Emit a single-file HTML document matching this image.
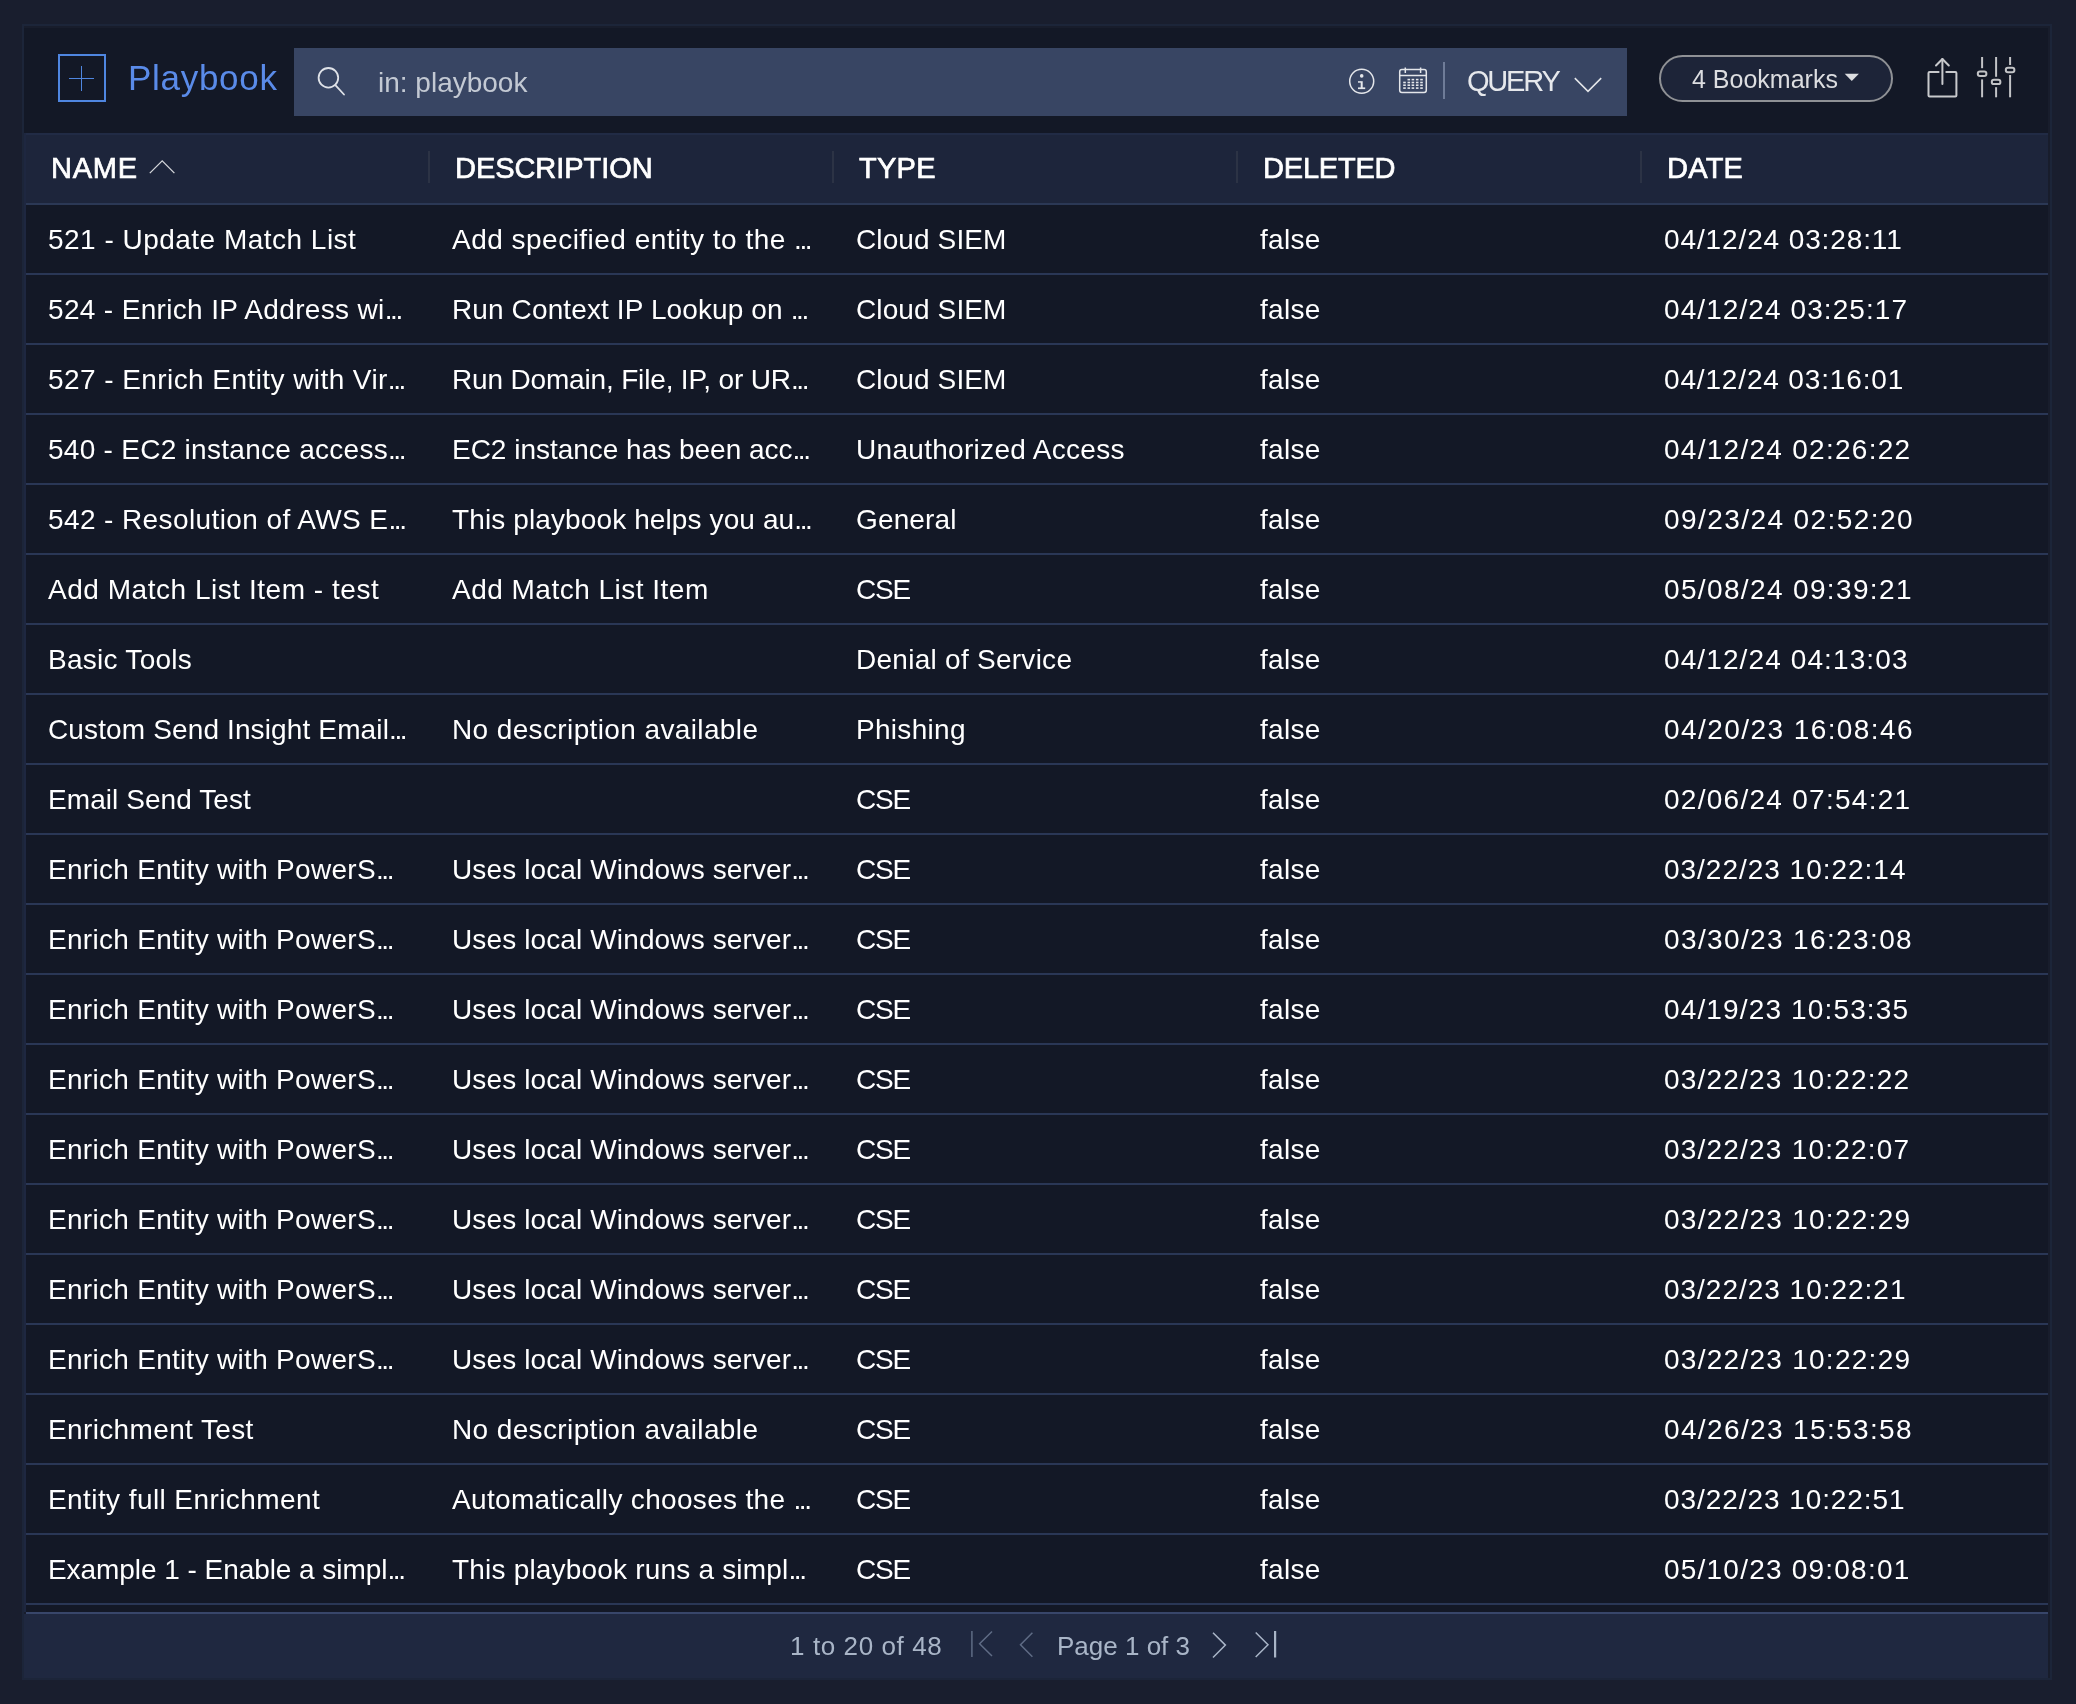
<!DOCTYPE html>
<html><head><meta charset="utf-8">
<style>
*{margin:0;padding:0;box-sizing:border-box}
html,body{width:2076px;height:1704px;overflow:hidden;background:#191e2e;font-family:"Liberation Sans",sans-serif}
.t,.h,.c{will-change:transform}
.a{position:absolute}
svg{position:absolute;left:0;top:0;overflow:visible}
.t{position:absolute;white-space:nowrap;line-height:1}
.h{position:absolute;top:-1px;height:68px;line-height:68px;font-size:29px;font-weight:normal;-webkit-text-stroke:0.7px #fff;letter-spacing:0.25px;margin-left:-1px;color:#fff;white-space:nowrap}
.row{position:absolute;left:26px;width:2022px;height:70px;background:#131826;border-bottom:2px solid #2a3756}
.c{position:absolute;top:1px;height:68px;line-height:68px;font-size:28px;color:#fff;white-space:nowrap;margin-left:-26px;letter-spacing:0.3px}
.c.d{letter-spacing:0.8px}
.el{letter-spacing:-2.4px}
</style></head><body>
<!-- panel frame -->
<div class="a" style="left:22px;top:24px;width:2030px;height:1656px;background:#1c2539"></div>
<div class="a" style="left:24px;top:26px;width:2026px;height:1652px;background:#181d2c"></div>
<!-- toolbar -->
<div class="a" style="left:24px;top:28px;width:2024px;height:105px;background:#131826"></div>
<!-- header -->
<div class="a" style="left:24px;top:133px;width:2024px;height:2px;background:#212b45"></div>
<div class="a" style="left:24px;top:135px;width:2024px;height:68px;background:#1d253b">
  <div class="h" style="left:28px;letter-spacing:0.75px">NAME</div>
  <div class="a" style="left:404px;top:16px;width:2px;height:32px;background:#2c3345"></div>
  <div class="h" style="left:432px;letter-spacing:-0.05px">DESCRIPTION</div>
  <div class="a" style="left:808px;top:16px;width:2px;height:32px;background:#2c3345"></div>
  <div class="h" style="left:836px">TYPE</div>
  <div class="a" style="left:1212px;top:16px;width:2px;height:32px;background:#2c3345"></div>
  <div class="h" style="left:1240px;letter-spacing:-0.2px">DELETED</div>
  <div class="a" style="left:1616px;top:16px;width:2px;height:32px;background:#2c3345"></div>
  <div class="h" style="left:1644px">DATE</div>
</div>
<div class="a" style="left:26px;top:203px;width:2022px;height:2px;background:#2b3855"></div>
<div class="row" style="top:205px"><div class="c" style="left:48px;letter-spacing:0.482px">521 - Update Match List</div><div class="c" style="left:452px;letter-spacing:0.486px">Add specified entity to the <span class="el">...</span></div><div class="c" style="left:856px;letter-spacing:0.111px">Cloud SIEM</div><div class="c" style="left:1260px;letter-spacing:0.325px">false</div><div class="c d" style="left:1664px;letter-spacing:0.881px">04/12/24 03:28:11</div></div>
<div class="row" style="top:275px"><div class="c" style="left:48px;letter-spacing:0.338px">524 - Enrich IP Address wi<span class="el">...</span></div><div class="c" style="left:452px;letter-spacing:0.116px">Run Context IP Lookup on <span class="el">...</span></div><div class="c" style="left:856px;letter-spacing:0.111px">Cloud SIEM</div><div class="c" style="left:1260px;letter-spacing:0.325px">false</div><div class="c d" style="left:1664px;letter-spacing:1.081px">04/12/24 03:25:17</div></div>
<div class="row" style="top:345px"><div class="c" style="left:48px;letter-spacing:0.429px">527 - Enrich Entity with Vir<span class="el">...</span></div><div class="c" style="left:452px;letter-spacing:-0.167px">Run Domain, File, IP, or UR<span class="el">...</span></div><div class="c" style="left:856px;letter-spacing:0.111px">Cloud SIEM</div><div class="c" style="left:1260px;letter-spacing:0.325px">false</div><div class="c d" style="left:1664px;letter-spacing:0.844px">04/12/24 03:16:01</div></div>
<div class="row" style="top:415px"><div class="c" style="left:48px;letter-spacing:0.276px">540 - EC2 instance access<span class="el">...</span></div><div class="c" style="left:452px;letter-spacing:-0.016px">EC2 instance has been acc<span class="el">...</span></div><div class="c" style="left:856px;letter-spacing:0.300px">Unauthorized Access</div><div class="c" style="left:1260px;letter-spacing:0.325px">false</div><div class="c d" style="left:1664px;letter-spacing:1.275px">04/12/24 02:26:22</div></div>
<div class="row" style="top:485px"><div class="c" style="left:48px;letter-spacing:0.396px">542 - Resolution of AWS E<span class="el">...</span></div><div class="c" style="left:452px;letter-spacing:0.115px">This playbook helps you au<span class="el">...</span></div><div class="c" style="left:856px;letter-spacing:0.150px">General</div><div class="c" style="left:1260px;letter-spacing:0.325px">false</div><div class="c d" style="left:1664px;letter-spacing:1.425px">09/23/24 02:52:20</div></div>
<div class="row" style="top:555px"><div class="c" style="left:48px;letter-spacing:0.532px">Add Match List Item - test</div><div class="c" style="left:452px;letter-spacing:0.489px">Add Match List Item</div><div class="c" style="left:856px;letter-spacing:-1.200px">CSE</div><div class="c" style="left:1260px;letter-spacing:0.325px">false</div><div class="c d" style="left:1664px;letter-spacing:1.356px">05/08/24 09:39:21</div></div>
<div class="row" style="top:625px"><div class="c" style="left:48px;letter-spacing:0.270px">Basic Tools</div><div class="c" style="left:856px;letter-spacing:0.269px">Denial of Service</div><div class="c" style="left:1260px;letter-spacing:0.325px">false</div><div class="c d" style="left:1664px;letter-spacing:1.106px">04/12/24 04:13:03</div></div>
<div class="row" style="top:695px"><div class="c" style="left:48px;letter-spacing:0.132px">Custom Send Insight Email<span class="el">...</span></div><div class="c" style="left:452px;letter-spacing:0.378px">No description available</div><div class="c" style="left:856px;letter-spacing:0.300px">Phishing</div><div class="c" style="left:1260px;letter-spacing:0.325px">false</div><div class="c d" style="left:1664px;letter-spacing:1.431px">04/20/23 16:08:46</div></div>
<div class="row" style="top:765px"><div class="c" style="left:48px;letter-spacing:0.071px">Email Send Test</div><div class="c" style="left:856px;letter-spacing:-1.200px">CSE</div><div class="c" style="left:1260px;letter-spacing:0.325px">false</div><div class="c d" style="left:1664px;letter-spacing:1.275px">02/06/24 07:54:21</div></div>
<div class="row" style="top:835px"><div class="c" style="left:48px;letter-spacing:0.292px">Enrich Entity with PowerS<span class="el">...</span></div><div class="c" style="left:452px;letter-spacing:0.124px">Uses local Windows server<span class="el">...</span></div><div class="c" style="left:856px;letter-spacing:-1.200px">CSE</div><div class="c" style="left:1260px;letter-spacing:0.325px">false</div><div class="c d" style="left:1664px;letter-spacing:0.981px">03/22/23 10:22:14</div></div>
<div class="row" style="top:905px"><div class="c" style="left:48px;letter-spacing:0.292px">Enrich Entity with PowerS<span class="el">...</span></div><div class="c" style="left:452px;letter-spacing:0.124px">Uses local Windows server<span class="el">...</span></div><div class="c" style="left:856px;letter-spacing:-1.200px">CSE</div><div class="c" style="left:1260px;letter-spacing:0.325px">false</div><div class="c d" style="left:1664px;letter-spacing:1.369px">03/30/23 16:23:08</div></div>
<div class="row" style="top:975px"><div class="c" style="left:48px;letter-spacing:0.292px">Enrich Entity with PowerS<span class="el">...</span></div><div class="c" style="left:452px;letter-spacing:0.124px">Uses local Windows server<span class="el">...</span></div><div class="c" style="left:856px;letter-spacing:-1.200px">CSE</div><div class="c" style="left:1260px;letter-spacing:0.325px">false</div><div class="c d" style="left:1664px;letter-spacing:1.144px">04/19/23 10:53:35</div></div>
<div class="row" style="top:1045px"><div class="c" style="left:48px;letter-spacing:0.292px">Enrich Entity with PowerS<span class="el">...</span></div><div class="c" style="left:452px;letter-spacing:0.124px">Uses local Windows server<span class="el">...</span></div><div class="c" style="left:856px;letter-spacing:-1.200px">CSE</div><div class="c" style="left:1260px;letter-spacing:0.325px">false</div><div class="c d" style="left:1664px;letter-spacing:1.206px">03/22/23 10:22:22</div></div>
<div class="row" style="top:1115px"><div class="c" style="left:48px;letter-spacing:0.292px">Enrich Entity with PowerS<span class="el">...</span></div><div class="c" style="left:452px;letter-spacing:0.124px">Uses local Windows server<span class="el">...</span></div><div class="c" style="left:856px;letter-spacing:-1.200px">CSE</div><div class="c" style="left:1260px;letter-spacing:0.325px">false</div><div class="c d" style="left:1664px;letter-spacing:1.206px">03/22/23 10:22:07</div></div>
<div class="row" style="top:1185px"><div class="c" style="left:48px;letter-spacing:0.292px">Enrich Entity with PowerS<span class="el">...</span></div><div class="c" style="left:452px;letter-spacing:0.124px">Uses local Windows server<span class="el">...</span></div><div class="c" style="left:856px;letter-spacing:-1.200px">CSE</div><div class="c" style="left:1260px;letter-spacing:0.325px">false</div><div class="c d" style="left:1664px;letter-spacing:1.269px">03/22/23 10:22:29</div></div>
<div class="row" style="top:1255px"><div class="c" style="left:48px;letter-spacing:0.292px">Enrich Entity with PowerS<span class="el">...</span></div><div class="c" style="left:452px;letter-spacing:0.124px">Uses local Windows server<span class="el">...</span></div><div class="c" style="left:856px;letter-spacing:-1.200px">CSE</div><div class="c" style="left:1260px;letter-spacing:0.325px">false</div><div class="c d" style="left:1664px;letter-spacing:0.981px">03/22/23 10:22:21</div></div>
<div class="row" style="top:1325px"><div class="c" style="left:48px;letter-spacing:0.292px">Enrich Entity with PowerS<span class="el">...</span></div><div class="c" style="left:452px;letter-spacing:0.124px">Uses local Windows server<span class="el">...</span></div><div class="c" style="left:856px;letter-spacing:-1.200px">CSE</div><div class="c" style="left:1260px;letter-spacing:0.325px">false</div><div class="c d" style="left:1664px;letter-spacing:1.269px">03/22/23 10:22:29</div></div>
<div class="row" style="top:1395px"><div class="c" style="left:48px;letter-spacing:0.364px">Enrichment Test</div><div class="c" style="left:452px;letter-spacing:0.378px">No description available</div><div class="c" style="left:856px;letter-spacing:-1.200px">CSE</div><div class="c" style="left:1260px;letter-spacing:0.325px">false</div><div class="c d" style="left:1664px;letter-spacing:1.363px">04/26/23 15:53:58</div></div>
<div class="row" style="top:1465px"><div class="c" style="left:48px;letter-spacing:0.414px">Entity full Enrichment</div><div class="c" style="left:452px;letter-spacing:0.323px">Automatically chooses the <span class="el">...</span></div><div class="c" style="left:856px;letter-spacing:-1.200px">CSE</div><div class="c" style="left:1260px;letter-spacing:0.325px">false</div><div class="c d" style="left:1664px;letter-spacing:0.931px">03/22/23 10:22:51</div></div>
<div class="row" style="top:1535px"><div class="c" style="left:48px;letter-spacing:-0.054px">Example 1 - Enable a simpl<span class="el">...</span></div><div class="c" style="left:452px;letter-spacing:0.192px">This playbook runs a simpl<span class="el">...</span></div><div class="c" style="left:856px;letter-spacing:-1.200px">CSE</div><div class="c" style="left:1260px;letter-spacing:0.325px">false</div><div class="c d" style="left:1664px;letter-spacing:1.219px">05/10/23 09:08:01</div></div>
<div class="a" style="left:24px;top:133px;width:2px;height:1479px;background:#1e2740"></div>
<div class="a" style="left:26px;top:1605px;width:2022px;height:7px;background:#131826"></div>
<!-- footer -->
<div class="a" style="left:26px;top:1612px;width:2022px;height:2px;background:#38466a"></div>
<div class="a" style="left:24px;top:1614px;width:2024px;height:64px;background:#1f2840"></div>
<div class="a" style="left:22px;top:1678px;width:2030px;height:2px;background:#1c2539"></div>

<!-- toolbar content -->
<div class="a" style="left:58px;top:54px;width:48px;height:48px;border:2px solid #4f86e0"></div>
<div class="a" style="left:69px;top:77.5px;width:25px;height:1.5px;background:#4f86e0"></div>
<div class="a" style="left:80.5px;top:66px;width:1.5px;height:25px;background:#4f86e0"></div>
<div class="t" style="left:128px;top:59.5px;font-size:35px;letter-spacing:0.7px;color:#5a8be9">Playbook</div>
<div class="a" style="left:294px;top:48px;width:1333px;height:68px;background:#384563"></div>
<svg width="2076" height="1704">
  <g fill="none" stroke="#dfe2e8" stroke-width="1.8" stroke-linecap="round">
    <circle cx="328.4" cy="77.8" r="9.8"/>
    <line x1="335.6" y1="85.3" x2="344" y2="94.5"/>
  </g>
</svg>
<div class="t" style="left:378px;top:69px;font-size:28px;color:#c3c9d3">in: playbook</div>
<div class="t" style="left:1467px;top:67px;font-size:29px;color:#e6e8ec;letter-spacing:-2.2px">QUERY</div>
<div class="a" style="left:1659px;top:55px;width:234px;height:47px;border:2px solid #8f9195;border-radius:24px;background:#1d2438"></div>
<div class="t" style="left:1692px;top:67px;font-size:25px;color:#dcdde0">4 Bookmarks</div>

<!-- footer text -->
<div class="t" style="left:790px;top:1633px;font-size:26px;color:#a9b5c7;letter-spacing:0.6px">1 to 20 of 48</div>
<div class="t" style="left:1057px;top:1633px;font-size:26px;color:#a9b5c7">Page 1 of 3</div>
<svg width="2076" height="1704">
  <!-- info -->
  <g fill="none" stroke="#e4e6ea" stroke-width="1.5">
    <circle cx="1361.7" cy="81.3" r="12"/>
  </g>
  <g fill="#e4e6ea">
    <circle cx="1361.7" cy="75.9" r="1.8"/>
    <rect x="1360.7" y="81.2" width="2" height="7.4"/>
    <rect x="1358" y="81.2" width="3" height="1.5"/>
    <rect x="1358" y="87.4" width="7.2" height="1.7"/>
  </g>
  <!-- calendar -->
  <g fill="none" stroke="#e4e6ea" stroke-width="1.5">
    <rect x="1399.7" y="69.6" width="26.6" height="22.8" rx="2.2"/>
    <line x1="1399.7" y1="75.5" x2="1426.3" y2="75.5"/>
    <line x1="1405.3" y1="67.5" x2="1405.3" y2="73"/>
    <line x1="1420.6" y1="67.5" x2="1420.6" y2="73"/>
  </g>
  <g fill="#e4e6ea"><rect x="1407.5" y="78.8" width="2.6" height="1.6"/><rect x="1411.6" y="78.8" width="2.6" height="1.6"/><rect x="1415.9" y="78.8" width="2.6" height="1.6"/><rect x="1420.2" y="78.8" width="2.6" height="1.6"/><rect x="1403.2" y="81.7" width="2.6" height="1.6"/><rect x="1407.5" y="81.7" width="2.6" height="1.6"/><rect x="1411.6" y="81.7" width="2.6" height="1.6"/><rect x="1415.9" y="81.7" width="2.6" height="1.6"/><rect x="1420.2" y="81.7" width="2.6" height="1.6"/><rect x="1403.2" y="84.4" width="2.6" height="1.6"/><rect x="1407.5" y="84.4" width="2.6" height="1.6"/><rect x="1411.6" y="84.4" width="2.6" height="1.6"/><rect x="1415.9" y="84.4" width="2.6" height="1.6"/><rect x="1420.2" y="84.4" width="2.6" height="1.6"/><rect x="1403.2" y="87.3" width="2.6" height="1.6"/><rect x="1407.5" y="87.3" width="2.6" height="1.6"/><rect x="1411.6" y="87.3" width="2.6" height="1.6"/><rect x="1415.9" y="87.3" width="2.6" height="1.6"/><rect x="1420.2" y="87.3" width="2.6" height="1.6"/></g>
  <!-- divider -->
  <rect x="1443" y="62" width="2" height="37" fill="#6f7c98"/>
  <!-- query chevron -->
  <polyline points="1574.8,78.1 1588,91.4 1601.2,78.1" fill="none" stroke="#e4e6ea" stroke-width="1.5"/>
  <!-- bookmarks triangle -->
  <polygon points="1844.7,73.8 1858.9,73.8 1851.8,81" fill="#dcdde0"/>
  <!-- share -->
  <g fill="none" stroke="#c8c9cc" stroke-width="2" stroke-linecap="round" stroke-linejoin="round">
    <path d="M1938.6,72 H1929.6 Q1928.5,72 1928.5,73.1 V95.5 Q1928.5,96.6 1929.6,96.6 H1955.3 Q1956.4,96.6 1956.4,95.5 V73.1 Q1956.4,72 1955.3,72 H1946.3"/>
    <line x1="1942.4" y1="59" x2="1942.4" y2="84"/>
    <polyline points="1936,65.5 1942.4,59 1948.8,65.5"/>
  </g>
  <!-- sliders -->
  <g fill="none" stroke="#c2c3c6" stroke-width="2" stroke-linecap="butt">
    <line x1="1982.1" y1="57" x2="1982.1" y2="68.2"/>
    <line x1="1982.1" y1="79.4" x2="1982.1" y2="97.3"/>
    <rect x="1977.8" y="71.6" width="8.6" height="4.4" rx="2.2"/>
    <line x1="1996.1" y1="57" x2="1996.1" y2="76.8"/>
    <line x1="1996.1" y1="87.2" x2="1996.1" y2="97.3"/>
    <rect x="1991.8" y="79.7" width="8.6" height="4.4" rx="2.2"/>
    <line x1="2010.1" y1="57" x2="2010.1" y2="65"/>
    <line x1="2010.1" y1="75" x2="2010.1" y2="97.3"/>
    <rect x="2005.8" y="67.8" width="8.6" height="4.4" rx="2.2"/>
  </g>
  <!-- sort chevron -->
  <polyline points="149.8,173.1 162.2,160.8 174.4,173.1" fill="none" stroke="#d4d6da" stroke-width="1.3"/>
  <!-- pagination -->
  <g fill="none" stroke="#5f6c85" stroke-width="1.5">
    <line x1="971.9" y1="1631" x2="971.9" y2="1657"/>
    <polyline points="992,1631.5 979.6,1643.8 992,1656"/>
    <polyline points="1032.4,1632.8 1020.5,1644.8 1032.4,1656.8"/>
  </g>
  <g fill="none" stroke="#a9b5c7" stroke-width="1.5">
    <polyline points="1213,1632.8 1225.4,1645.1 1213,1657.5"/>
    <polyline points="1255.7,1632.5 1268,1644.8 1255.7,1657"/>
  </g>
  <rect x="1274" y="1631" width="2.2" height="26.5" fill="#a9b5c7"/>
</svg>

</body></html>
